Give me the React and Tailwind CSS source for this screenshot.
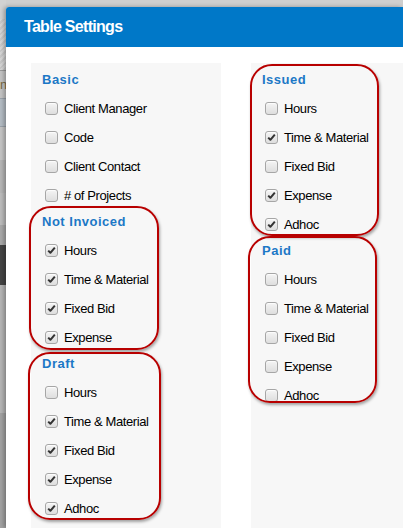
import React from 'react';

const leftGroups = [
  {
    title: 'Basic',
    items: [
      ['Client Manager', false],
      ['Code', false],
      ['Client Contact', false],
      ['# of Projects', false],
    ],
  },
  {
    title: 'Not Invoiced',
    items: [
      ['Hours', true],
      ['Time & Material', true],
      ['Fixed Bid', true],
      ['Expense', true],
    ],
  },
  {
    title: 'Draft',
    items: [
      ['Hours', false],
      ['Time & Material', true],
      ['Fixed Bid', true],
      ['Expense', true],
      ['Adhoc', true],
    ],
  },
];

const rightGroups = [
  {
    title: 'Issued',
    items: [
      ['Hours', false],
      ['Time & Material', true],
      ['Fixed Bid', false],
      ['Expense', true],
      ['Adhoc', true],
    ],
  },
  {
    title: 'Paid',
    items: [
      ['Hours', false],
      ['Time & Material', false],
      ['Fixed Bid', false],
      ['Expense', false],
      ['Adhoc', false],
    ],
  },
];

// annotation rings drawn over the screenshot
const rings = [
  'left-[29px] top-[206px] w-[130px] h-[144px]',
  'left-[28px] top-[352px] w-[133px] h-[168px]',
  'left-[250px] top-[64px] w-[129px] h-[172px]',
  'left-[248px] top-[236px] w-[129px] h-[167px]',
];

function Checkbox({ checked }) {
  return (
    <span className="w-[13px] h-[13px] shrink-0 rounded-[3px] border border-[#a6a6a6] bg-gradient-to-b from-[#f4f4f4] to-[#dedede] shadow-[inset_0_1px_1px_rgba(255,255,255,0.8)] flex items-center justify-center">
      {checked && (
        <svg width="9" height="9" viewBox="0 0 9 9">
          <path d="M1.2 4.6 L3.4 6.8 L7.8 1.6" fill="none" stroke="#333" strokeWidth="2" strokeLinejoin="round" />
        </svg>
      )}
    </span>
  );
}

function Group({ title, items, first }) {
  return (
    <div className={first ? '' : 'mt-[4px]'}>
      <h3 className="text-[13px] leading-[15px] font-bold tracking-[0.5px] text-[#1c78c6] mb-[7px]">{title}</h3>
      {items.map(([label, checked], i) => (
        <label key={i} className="h-[29px] flex items-center pl-[3px]">
          <Checkbox checked={checked} />
          <span className="ml-[6px] text-[13px] leading-[15px] tracking-[-0.4px] text-black">{label}</span>
        </label>
      ))}
    </div>
  );
}

function Panel({ groups, className }) {
  return (
    <div className={`bg-[#f7f7f7] pt-[9px] pl-[11px] ${className}`}>
      {groups.map((g, i) => (
        <Group key={g.title} {...g} first={i === 0} />
      ))}
    </div>
  );
}

export default function App() {
  return (
    <div
      className="relative w-[403px] h-[528px] overflow-hidden bg-[#cfcfcf] flex"
      style={{ fontFamily: '"Liberation Sans", Arial, sans-serif' }}
    >
      {/* page behind the modal */}
      <div className="w-[6px] shrink-0 flex flex-col">
        <div className="h-[19px] bg-[#d2d2d2]" />
        <div className="h-[51px] bg-[repeating-linear-gradient(135deg,#d6d6d6_0px,#d6d6d6_2px,#c9c9c9_2px,#c9c9c9_4px)]" />
        <div className="h-[28px] bg-[#c4c4c4] border-t border-[#9a9a9a] text-[13px] leading-[28px] text-[#7a6a40] overflow-hidden">n</div>
        <div className="h-[29px] bg-[#b4bcc4] border-y border-[#9aa2aa]" />
        <div className="h-[33px] bg-[#c5c5c5]" />
        <div className="h-[33px] bg-[#b6b6b6]" />
        <div className="h-[32px] bg-[#bcbcbc]" />
        <div className="h-[20px] bg-[#a9a9a9]" />
        <div className="h-[40px] bg-[#454545]" />
        <div className="h-[128px] bg-[#b5b5b5]" />
        <div className="flex-1 bg-[#a2a2a2]" />
      </div>

      {/* modal */}
      <div className="flex-1 mt-[7px] bg-white rounded-tl-[3px] shadow-[-2px_0_4px_rgba(0,0,0,0.3)] flex flex-col">
        <div className="h-[40px] shrink-0 bg-[#0078c8] rounded-tl-[3px] flex items-center pl-[18px]">
          <h2 className="text-white font-bold text-[16px] leading-[18px] tracking-[-0.7px]">Table Settings</h2>
        </div>
        <div className="flex-1 flex pt-[16px] pl-[25px] gap-[30px]">
          <Panel groups={leftGroups} className="w-[190px]" />
          <Panel groups={rightGroups} className="flex-1" />
        </div>
      </div>

      {rings.map((r, i) => (
        <div
          key={i}
          className={`absolute ${r} rounded-[22px] border-2 border-[#b80000] shadow-[1px_2px_3px_rgba(0,0,0,0.35)] pointer-events-none`}
        />
      ))}
    </div>
  );
}
